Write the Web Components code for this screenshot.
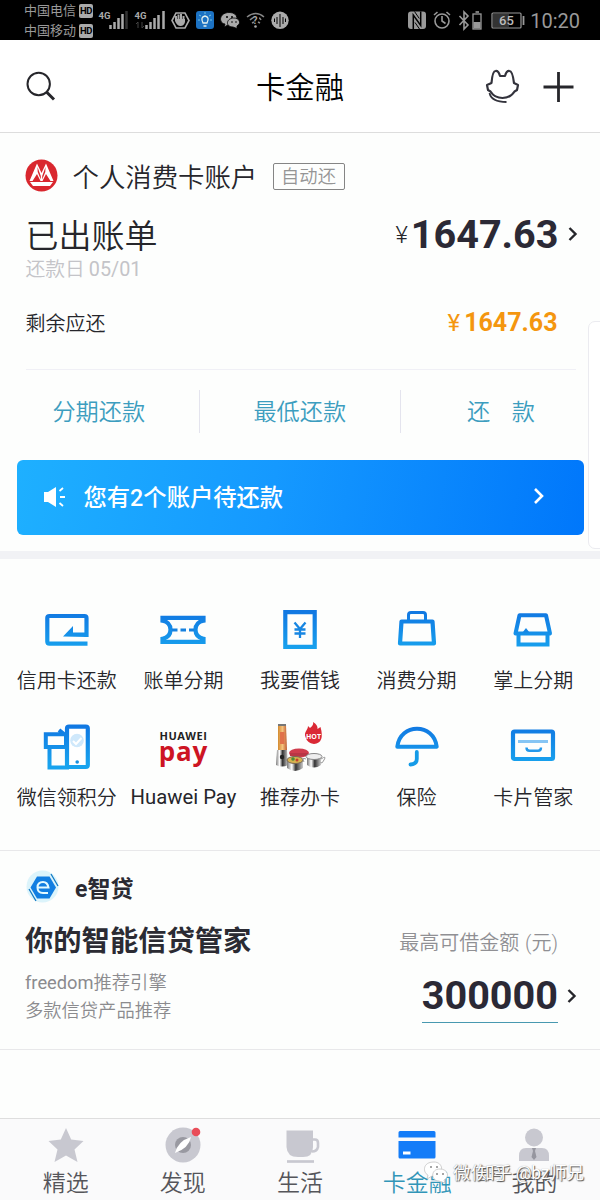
<!DOCTYPE html>
<html lang="zh-CN">
<head>
<meta charset="utf-8">
<title>卡金融</title>
<style>
html,body{margin:0;padding:0}
body{width:600px;height:1200px;overflow:hidden;background:#fdfefd;font-family:Roboto,"Noto Sans CJK SC",sans-serif;font-weight:350;color:#26262b}
</style>
</head>
<body>
<card-app></card-app>
<script>
const define=(name,css,html)=>customElements.define(name,class extends HTMLElement{
  constructor(){
    super();
    const t=document.createElement('template');
    t.innerHTML=`<style>*{box-sizing:border-box}svg{display:block;flex:none;overflow:visible}b{font-weight:700}${css}</style>${html}`;
    this.attachShadow({mode:'open'}).append(t.content.cloneNode(true));
  }
});

const ICONS={
 repay:`<g fill="none" stroke="url(#g)" stroke-width="4.2"><path d="M44.500 37V18Q44.500 16 42.500 16H7.500Q5.300 16 5.300 18V41.500Q5.300 43.600 7.500 43.600H45.500"/></g><path d="M21 36.500L31 26V32.500H45V37Z" fill="url(#g)"/><path d="M28 37H47.500V40.500H28Z" fill="#fdfefd"/>`,
 ticket:`<path d="M4 17.500H45V20.500Q37 22 37 29.500T45 38.500V41.500H4V38.500Q12 37 12 29.500T4 20.500Z" fill="none" stroke="url(#g)" stroke-width="4.200" transform="translate(.5 .3)"/><path d="M14 30H19.500M22.500 30H28M31 30H36" stroke="#1681df" stroke-width="3.200"/>`,
 loan:`<path d="M10.300 12.200H39.700V46.800H10.300Z" fill="none" stroke="url(#g)" stroke-width="4.200"/><path d="M19.500 22.500L25 29L30.500 22.500M25 29V38M19.500 29.500H30.500M19.500 33.500H30.500" fill="none" stroke="#1786e2" stroke-width="2.300"/>`,
 bag:`<path d="M16.500 21V15Q16.500 12.500 19 12.500H31Q33.500 12.500 33.500 15V21" fill="none" stroke="url(#g)" stroke-width="3"/><path d="M9.500 21.500H40.500L42 43.500H8Z" fill="none" stroke="url(#g)" stroke-width="4.200" stroke-linejoin="round"/>`,
 shop:`<path d="M11.500 15.300H38L42 33.500H7.500Z" fill="none" stroke="url(#g)" stroke-width="4" stroke-linejoin="round"/><path d="M10.500 34V44.500H39.500V34" fill="none" stroke="url(#g)" stroke-width="4"/><path d="M14.500 32.500L18 28L21.500 32.500Z" fill="#1687e4"/>`,
 points:`<path d="M3.800 20.300H24V33H3.800ZM7.500 33V53.500H27M17 16L22 20" fill="none" stroke="url(#g)" stroke-width="4"/><rect x="25" y="12.600" width="20.800" height="40.400" rx="2" fill="#fff" stroke="url(#g)" stroke-width="4.200"/><circle cx="35" cy="26.500" r="6.800" fill="#cfe8fb"/><path d="M31 27L34 30L39.500 24" fill="none" stroke="#fff" stroke-width="2"/><circle cx="35.200" cy="48" r="1.800" fill="#1890e0"/>`,
 umbrella:`<path d="M5.300 32.800C8 8.800 42 8.800 44.700 32.800Z" fill="none" stroke="url(#g)" stroke-width="4" stroke-linejoin="round"/><path d="M24.800 38V45Q24.800 50 18.500 50.500" fill="none" stroke="#159be7" stroke-width="3.800" stroke-linecap="round"/>`,
 drawer:`<rect x="5" y="17.500" width="40" height="27.500" rx="1.500" fill="none" stroke="url(#g)" stroke-width="4.200"/><path d="M10 27.500H40" stroke="#86c5f4" stroke-width="3"/><path d="M18.500 33.500Q18.500 36.800 21.500 36.800H30Q33 36.800 33 33.500" fill="none" stroke="#2398eb" stroke-width="2.400"/>`,
 gifts:`<defs><linearGradient id="j" x2="1"><stop stop-color="#d38a2e"/><stop offset=".5" stop-color="#f4c27e"/><stop offset="1" stop-color="#bd5b31"/></linearGradient><linearGradient id="m" x2="1"><stop stop-color="#777"/><stop offset=".3" stop-color="#fff"/><stop offset=".55" stop-color="#333"/><stop offset="1" stop-color="#ccc"/></linearGradient></defs>
 <path d="M3 11H11L12 36H3Z" fill="url(#j)"/><path d="M3 10H11V12H3Z" fill="#777"/><path d="M5 18H9.500V30H5Z" fill="#e0714b"/><path d="M2 36H12L13 51Q7 54 1 51Z" fill="url(#m)"/><circle cx="7" cy="43" r="2.200" fill="#222"/>
 <ellipse cx="24" cy="39" rx="10" ry="4.500" fill="#cf3d4d"/><path d="M15 39H33V42H15Z" fill="#b93645"/><path d="M12 46H28V54Q20 60 12 54Z" fill="url(#m)"/><ellipse cx="20" cy="46" rx="8" ry="3.500" fill="#d7b34e" stroke="#765"/><circle cx="18" cy="45" r="1.800" fill="#4b8a35"/><circle cx="22" cy="46" r="1.500" fill="#c2412c"/>
 <path d="M32 43H46V51Q39 56 32 51Z" fill="url(#m)"/><ellipse cx="39" cy="42.500" rx="8" ry="3" fill="#eee" stroke="#888"/><path d="M46 45Q52 41 49 46T46 48M31 45Q26 43 29 48" fill="none" stroke="#999"/>
 <path d="M30.500 23C28.500 18 33 16 33 12L35 14Q39 11 38 8Q43 11 42.500 15L45.500 13Q50 29 39 30Q32 29 30.500 23Z" fill="#da2935"/>`,
};
const grad=`<defs><linearGradient id="g" gradientUnits="userSpaceOnUse" x1="0" y1="12" x2="0" y2="50"><stop stop-color="#1178e2"/><stop offset="1" stop-color="#18a3ee"/></linearGradient></defs>`;

define('status-bar',`
:host{display:flex;height:40px;background:#000;color:#999;padding:0 20px 0 24px;align-items:center;font-weight:400}
.ops{display:grid;gap:0;font-size:13px;line-height:20px;width:70px;padding-top:1px}
.ops div{display:flex;align-items:center;gap:3px}
b{background:#aaa;color:#000;border-radius:2px;font:700 9.500px/14px Roboto;width:14px;text-align:center;letter-spacing:-.4px}
.time{font:400 20px/40px Roboto;margin-left:auto;color:#999;padding-top:2px}`,`
<div class="ops"><div>中国电信<b>HD</b></div><div>中国移动<b>HD</b></div></div>
<svg width="200" height="40" viewBox="94 0 200 40" fill="none" stroke="#aaa">
 <g fill="#aaa" stroke="none" font-family="Roboto" font-size="9.500" font-weight="700"><text x="98.500" y="18.500">4G</text><text x="134.500" y="18.500">4G</text></g>
 <g stroke-width="2.500"><path d="M110.500 29V25M114.500 29V22M118.500 29V18M122.500 29V14"/><path d="M126.500 29V11" stroke="#333"/><path d="M146.500 29V25M150.500 29V22M154.500 29V18M158.500 29V15M163.500 29V11"/></g>
 <path d="M138 22V28M136 24L138 22M142 22V28M144 26L142 28" stroke="#444"/>
 <path d="M176 13H185L189 20.500L185 28H176L172 20.500Z" stroke-width="1.600"/><path d="M176 20V16M178.500 20V14.500M181 20V14M183.500 20V16" stroke-width="2"/><path d="M175 19H185V22Q184 26 180.500 26Q177 26 175 21Z" fill="#aaa" stroke="none"/>
 <rect x="196" y="11" width="18" height="18" rx="3" fill="#1c72c3" stroke="none"/><path d="M203 23Q200 17 205 16Q210 17 207 23ZM203.500 26H206.500" stroke="#e3f0ee" stroke-width="1.300"/><path d="M205 12V14M199 15L201 16M211 15L209 16M198 20H200M212 20H210" stroke="#73c3e1"/>
 <g fill="#aaa" stroke="#000" stroke-width=".8"><path d="M230 12.500C219 12 218 23 225 24L224 27L228 25C239 25 240 13 230 12.500Z"/><path d="M234 18C226 18 225 27 233 27L237 28.500L237 26C242 23 239 18 234 18Z"/></g><g fill="#000" stroke="none"><circle cx="227" cy="17" r="1"/><circle cx="232" cy="17" r="1"/><circle cx="232" cy="22" r=".8"/><circle cx="236" cy="22" r=".8"/></g>
 <path d="M247 17Q256 10 264 17M250 20Q252 18 253 18M261 20Q260 18 259 18M252 23L254 22M260 23L258 22" stroke="#888" stroke-width="1.500"/><text x="252.500" y="24" font-family="Roboto" font-weight="700" font-size="10" fill="#aaa" stroke="none">?</text><circle cx="255.500" cy="26.500" r="1.300" fill="#aaa" stroke="none"/>
 <circle cx="280" cy="20.300" r="8.700" fill="#aaa" stroke="none"/><path d="M274.500 18.500V22M277 17V24M280 14V27M283 17V24M285.500 18.500V22" stroke="#000" stroke-width="1"/>
</svg>
<svg width="122" height="40" viewBox="405 0 122 40" fill="none" stroke="#999" stroke-width="1.600" style="margin-left:111px">
 <rect x="408" y="11.500" width="18" height="17.500" rx="3" fill="#999" stroke="none"/><path d="M413.300 29V15L420.700 25.500V11.500" stroke="#000" stroke-width="1.500"/><path d="M414.500 11.500L419.300 18.500M419.500 29L415 22.500" stroke="#000" stroke-width="1"/>
 <circle cx="442" cy="21" r="7"/><path d="M442 16V21L445.500 23.500M434 15L437.500 12M446.500 12L450 15"/>
 <path d="M459.500 16L468 25L464 29V12L468 16L459.500 25"/><rect x="473" y="14" width="8" height="15" stroke-width="1.300"/><path d="M473.500 22H480.500V28.500H473.500Z" fill="#999" stroke="none"/><path d="M475.500 12H479"/>
 <rect x="492" y="13" width="29" height="15" rx="1" stroke-width="1.200"/><path d="M493 14H509V27H493Z" fill="#333" stroke="none"/><path d="M523.500 16V25" stroke-width="1.800"/><text x="499" y="25" font-size="13" font-family="Roboto" font-weight="500" fill="#bbb" stroke="none">65</text>
</svg>
<span class="time">10:20</span>`);

define('page-header',`
:host{display:flex;height:93px;border-bottom:1px solid #ddd;align-items:center;justify-content:space-between;padding:0 25px;background:#fff}
.side{display:flex;width:94px}.right{justify-content:flex-end;gap:24px;padding-right:1px}
h1{margin:0;font-size:29.300px;font-weight:350;line-height:40px;color:#000;padding-top:4px}`,`
<div class="side"><svg width="32" height="32" viewBox="25 70 32 32" fill="none" stroke="#26262b"><circle cx="38.700" cy="84" r="11.200" stroke-width="2"/><path d="M46.500 92L54 99.500" stroke-width="3"/></svg></div>
<h1>卡金融</h1>
<div class="side right"><svg width="34" height="34" viewBox="482.500 69 34 34" fill="none" stroke="#33333c" stroke-width="2.200" stroke-linejoin="round"><path d="M489 83Q490 71 493 71Q496 70.500 497.500 76H502.500Q504 70.500 507 71Q510 71 511.500 83L515.500 85L514.500 90L512 91.500Q508 98 500 98Q492 98 488 91.500L485.500 90L484.500 85Z"/><path d="M487 93Q489 102 504 102" stroke-width="1.800"/></svg>
<svg width="31" height="34" viewBox="543 69 31 34" stroke="#26262b" stroke-width="2.800"><path d="M543.500 87H573.500M558.500 72V102"/></svg></div>`);

define('account-panel',`
:host{display:block;height:418px;position:relative;padding:22px 16.500px 0}
.row{display:flex;align-items:center;padding:0 9px}
.name{height:42px}.name svg{margin:-2px 0 0 -1px}.name span{font-size:26.400px;line-height:40px;margin-left:15px;width:200px;white-space:nowrap;padding-top:4px}
.tag{border:1.500px solid #858585;border-radius:2px;width:72px;height:27px;font-size:18.300px;line-height:26px;color:#959595;text-align:center}
.bill{height:46px;margin-top:15px;font-size:33px;line-height:46px}.bill>span{padding-top:3px}
.sum{margin-left:auto;display:flex;align-items:center}.yen{font-size:24px;margin-right:3px;line-height:40px}
.num{font-size:39.600px;font-weight:700;color:#2b2935;line-height:46px}
.bill svg{margin:-3px -2px 0 9px}
.date{font-size:19.800px;line-height:28px;color:#c4c4c8;height:24px}.date i{font-style:normal;font-weight:400;margin-left:4px}
.left{height:30px;margin-top:27px;font-size:20px;line-height:28px}
.left .sum{color:#f4960f;padding-right:17px;font-weight:400;margin-top:-2px}.left b{font-size:25px;margin-left:4px}.left .yen{font-size:24px;margin:0}
.actions{margin-top:29.500px;margin-left:9px;margin-right:8px;border-top:1px solid #f0f0f6;height:91px;display:grid;grid-template-columns:174.500px 200.500px 1fr;align-items:start;padding-top:20px;color:#3c9dbf;font-size:23.200px;line-height:45px;text-align:center}
.actions span{border-right:1px solid #e4e4ee;height:43px;padding-right:27px}.actions span:nth-child(2){padding-right:0}.actions span:last-child{border:0;padding:0 0 0 26px;word-spacing:16px}
.banner{height:75px;border-radius:6px;background:linear-gradient(100deg,#1eb0ff,#1599ff 45%,#0077fb);color:#fff;display:flex;align-items:center;font-size:23.300px;font-weight:500;padding:0 39px 0 26px;width:567px}
.banner span{margin-left:17px;flex:1;line-height:40px;padding-top:1px}.banner svg:last-child{margin-top:-2px}
.drawer{position:absolute;right:-8px;top:188px;width:20px;height:228px;border:1.500px solid #ebebf0;border-radius:7px;background:#fff}`,`
<div class="row name"><svg width="33" height="33" viewBox="0 0 33 33"><circle cx="16.500" cy="16.500" r="16" fill="#d9272e"/><path d="M4.500 22L12 4.500L16.500 14L21 4.500L28.500 22Z" fill="#fff"/><path d="M7.500 22L12 15L15.500 22ZM17.500 22L21 15L25.500 22ZM12.500 8L15.800 17V20.500L12.700 13ZM20.500 8L17.200 17V20.500L20.300 13Z" fill="#d9272e"/><path d="M5 23H28L25 27H8Z" fill="#fff"/></svg><span>个人消费卡账户</span><div class="tag">自动还</div></div>
<div class="row bill"><span>已出账单</span><div class="sum"><span class="yen">¥</span><span class="num">1647.63</span></div><svg width="9" height="14" viewBox="0 0 9 14" fill="none" stroke="#26262b" stroke-width="2.400"><path d="M1.500 1L7.500 7L1.500 13"/></svg></div>
<div class="row date">还款日 <i>05/01</i></div>
<div class="row left"><span>剩余应还</span><div class="sum"><span class="yen">¥</span><b>1647.63</b></div></div>
<div class="actions"><span>分期还款</span><span>最低还款</span><span>还 款</span></div>
<div class="banner"><svg width="24" height="22" viewBox="0 0 24 22"><path d="M1 6H5L13 1V21L5 16H1Z" fill="#fff"/><path d="M16.500 5L20 2M17 11H22M16.500 17L20 20" stroke="#fff" stroke-width="1.800"/></svg><span>您有2个账户待还款</span><svg width="10" height="16" viewBox="0 0 10 16" fill="none" stroke="#fff" stroke-width="2.600"><path d="M0 1L7 8L0 15"/></svg></div>
<div class="drawer"></div>`);

customElements.define('service-item',class extends HTMLElement{
  constructor(){super();this.attachShadow({mode:'open'})}
  connectedCallback(){
    const k=this.getAttribute('icon');
    const art=k==='pay'?`<div class="pay"><i>HUAWEI</i><b>pay</b></div>`:`<div class="art"><svg width="50" height="60" viewBox="0 0 50 60">${grad}${ICONS[k]}</svg>${k==='gifts'?'<em>HOT</em>':''}</div>`;
    this.shadowRoot.innerHTML=`<style>*{box-sizing:border-box}:host{display:flex;flex-direction:column;align-items:center;height:117px;font-size:20px}
    :host([low]) .art{margin-top:-3px;margin-bottom:3px}
    svg{display:block;overflow:visible}.art{position:relative;width:50px;height:60px}
    em{position:absolute;left:31px;top:18px;font:700 7px/10px "Open Sans";color:#fff}
    span{line-height:30px;margin-top:6px;white-space:nowrap}:host([icon=pay]) span{font-size:20.300px;font-weight:400;line-height:28px}
    .pay{height:60px;width:60px;display:flex;flex-direction:column;align-items:center;padding-top:13px}
    i{font:700 11px/12px "Open Sans";color:#222;letter-spacing:.5px;height:12px}b{font:700 26px/20px "Open Sans";color:#cd1423;letter-spacing:.8px;margin-top:-1px}
    </style>${art}<span><slot></slot></span>`;
  }
});
define('service-grid',`
:host{display:grid;grid-template-columns:repeat(5,116.600px);justify-content:center;height:300px;border-top:8px solid #f1f2f5;border-bottom:1px solid #e8e8ea;padding-top:41px;align-content:start}`,`
<service-item icon="repay">信用卡还款</service-item><service-item icon="ticket">账单分期</service-item><service-item icon="loan">我要借钱</service-item><service-item icon="bag">消费分期</service-item><service-item icon="shop">掌上分期</service-item>
<service-item low icon="points">微信领积分</service-item><service-item low icon="pay">Huawei Pay</service-item><service-item low icon="gifts">推荐办卡</service-item><service-item low icon="umbrella">保险</service-item><service-item low icon="drawer">卡片管家</service-item>`);

define('loan-card',`
:host{display:block;height:199px;border-bottom:1.500px solid #e8e8ea;padding:18px 24px 0 25px}
.top{display:flex;align-items:center;gap:16px;height:36px;font-size:23px;font-weight:700;color:#2b2b33}.top span{margin-top:-1px}
.body{display:flex;justify-content:space-between}
h2{margin:17px 0 0;font-size:28.300px;line-height:40px;font-weight:700;color:#2b2b33}
p{margin:0;font-size:18.300px;line-height:28px;color:#8b8b8e}p i{font-style:normal;font-weight:400}.body h2+p{margin-top:7px}
.right{display:flex;flex-direction:column;align-items:flex-end}
.cap{font-size:20px;line-height:30px;color:#909094;margin:23px 18px 0 0;white-space:nowrap;word-spacing:1px}
.val{display:flex;align-items:center;gap:9px;margin-top:11px}.val b{font-size:39.600px;line-height:48px;height:54px;padding-top:3px;border-bottom:1.500px solid #4899b0;color:#2b2935}`,`
<div class="top"><svg width="34" height="34" viewBox="0 0 34 34"><circle cx="17.500" cy="16.500" r="16" fill="#dcf4fb"/><path d="M12 6.500H24.500L31 17.500L24.500 28.500H12L5.500 17.500Z" fill="#127ee1"/><path d="M26 4L33 16M4 19L11 31" stroke="#147bc5" stroke-width="1.300"/><path d="M12.500 17.500H23.500Q22.500 12 18 12Q12.500 12 12.500 17.500Q12.500 23 18 23H23" fill="none" stroke="#e4faff" stroke-width="2"/></svg><span>e智贷</span></div>
<div class="body"><div><h2>你的智能信贷管家</h2><p><i>freedom</i>推荐引擎</p><p>多款信贷产品推荐</p></div>
<div class="right"><div class="cap">最高可借金额 (元)</div><div class="val"><b>300000</b><svg width="9" height="14" viewBox="0 0 9 14" fill="none" stroke="#26262b" stroke-width="2.400"><path d="M1.500 1L7.500 7L1.500 13"/></svg></div></div></div>`);

define('tab-item',`:host{display:flex;flex-direction:column;align-items:center;font-size:23px;line-height:34px;color:#55555a;padding-top:6px}:host([active]){color:#3195b8}.i{height:40px;width:40px}.l{margin-top:2px}`,`<div class="i"><slot name="icon"></slot></div><div class="l"><slot></slot></div>`);
define('tab-bar',`:host{display:grid;grid-template-columns:repeat(5,117.200px);justify-content:center;height:82px;background:#fafafb;border-top:1.500px solid #dedede;margin-top:auto}`,`
<tab-item><svg slot="icon" width="40" height="40" viewBox="0 0 40 40"><path d="M20 3L25.200 14.500L37.500 16L28.500 24.500L31.500 37L20 30.500L8.500 37L11.500 24.500L2.500 16L14.800 14.500Z" fill="#c8c8d0"/></svg>精选</tab-item>
<tab-item><svg slot="icon" width="40" height="40" viewBox="0 0 40 40"><circle cx="20" cy="20" r="17.500" fill="#c8c8d0"/><circle cx="20" cy="20" r="8" fill="#9999a1"/><path d="M28 12Q26 23 12 28Q15 16 28 12Z" fill="#fff"/><circle cx="33" cy="7" r="4.300" fill="#e94d59"/></svg>发现</tab-item>
<tab-item><svg slot="icon" width="40" height="40" viewBox="0 0 40 40"><path d="M6.500 5.500H33V22Q33 32 23 32H18Q7 32 6.500 22Z" fill="#c8c8d0"/><path d="M33 14.500H35Q38 14.500 38 18V22Q37 26.500 32 26.500" fill="none" stroke="#c8c8d0" stroke-width="2.600"/><path d="M7 36.500H34" stroke="#c8c8d0" stroke-width="2.700"/></svg>生活</tab-item>
<tab-item active><svg slot="icon" width="40" height="40" viewBox="0 0 40 40"><path d="M1.500 12.500V7.500Q1.500 6 3 6H37Q38.500 6 38.500 7.500V12.500ZM1.500 16H38.500V32Q38.500 33.500 37 33.500H3Q1.500 33.500 1.500 32Z" fill="#147cf8"/><path d="M6 28H13.500" stroke="#fff" stroke-width="3"/></svg>卡金融</tab-item>
<tab-item><svg slot="icon" width="40" height="40" viewBox="0 0 40 40"><circle cx="20" cy="12.500" r="9" fill="#c8c8d0"/><path d="M5 36V31Q5 23 12 23H28Q35 23 35 31V36Z" fill="#c8c8d0"/><path d="M18 23H22L21 26L22.500 32L20 35L17.500 32L19 26Z" fill="#96969f"/></svg>我的</tab-item>`);

define('water-mark',`:host{position:absolute;left:424px;top:1157px;width:170px;height:32px;color:#fff;font-weight:400;font-size:17.500px;line-height:32px;text-shadow:1px 1px 1px #555,0 0 1px #999;white-space:nowrap}
span{position:absolute;top:0}.a{left:29px}.b{left:53px;letter-spacing:-.2px}`,`
<svg width="26" height="24" viewBox="0 0 26 24" fill="#fff" stroke="#bbb" stroke-width=".7" style="margin-top:4px"><path d="M10 1C-2 1-1 12 4 14L3 18L8 15C21 15 20 1 10 1Z"/><path d="M16 8C6 8 7 20 15 20L21 22L20 19C26 16 24 8 16 8Z"/><g fill="#888" stroke="none"><circle cx="7" cy="6" r="1"/><circle cx="13" cy="6" r="1"/><circle cx="13" cy="13" r="1"/><circle cx="19" cy="13" r="1"/></g></svg>
<span class="a">微信号</span><span class="b">知乎 @bz师兄</span>`);

define('card-app',`:host{display:flex;flex-direction:column;height:1200px;width:600px;position:relative;overflow:hidden}`,`
<status-bar></status-bar><page-header></page-header><account-panel></account-panel><service-grid></service-grid><loan-card></loan-card><tab-bar></tab-bar><water-mark></water-mark>`);
</script>
</body>
</html>
